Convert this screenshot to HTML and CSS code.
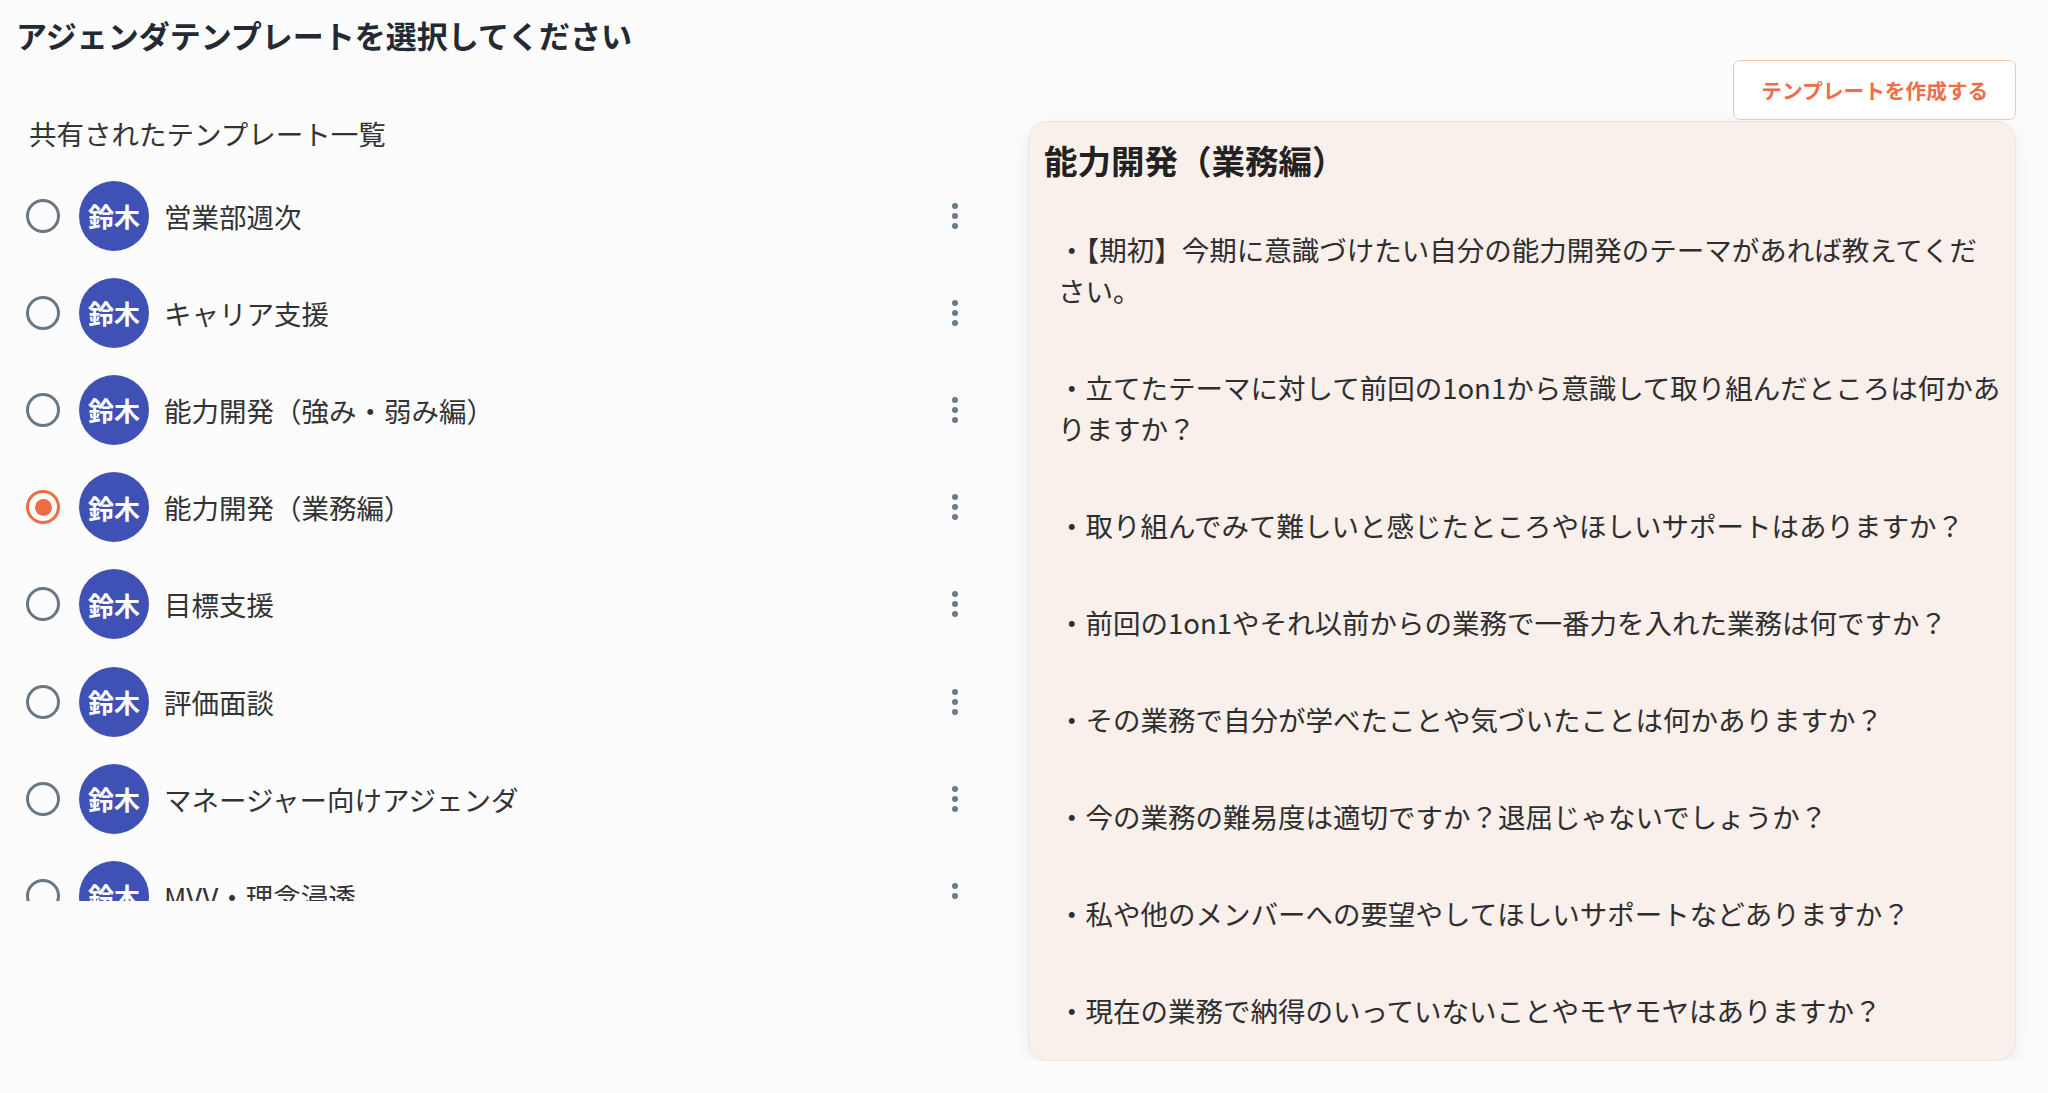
FILE: index.html
```html
<!DOCTYPE html>
<html lang="ja">
<head>
  <meta charset="UTF-8">
  <meta name="viewport" content="width=device-width, initial-scale=1.0">
  <title>アジェンダテンプレート選択</title>
  <link rel="stylesheet" href="styles.css">
</head>
<body>
  <h1 class="page-title">アジェンダテンプレートを選択してください</h1>

  <div class="layout">
    <section class="left">
      <h2 class="list-title">共有されたテンプレート一覧</h2>

      <ul class="template-list">
        <li class="row">
          <span class="radio"></span>
          <span class="avatar">鈴木</span>
          <span class="label">営業部週次</span>
          <span class="kebab"><i></i><i></i><i></i></span>
        </li>
        <li class="row">
          <span class="radio"></span>
          <span class="avatar">鈴木</span>
          <span class="label">キャリア支援</span>
          <span class="kebab"><i></i><i></i><i></i></span>
        </li>
        <li class="row">
          <span class="radio"></span>
          <span class="avatar">鈴木</span>
          <span class="label">能力開発（強み・弱み編）</span>
          <span class="kebab"><i></i><i></i><i></i></span>
        </li>
        <li class="row">
          <span class="radio checked"></span>
          <span class="avatar">鈴木</span>
          <span class="label">能力開発（業務編）</span>
          <span class="kebab"><i></i><i></i><i></i></span>
        </li>
        <li class="row">
          <span class="radio"></span>
          <span class="avatar">鈴木</span>
          <span class="label">目標支援</span>
          <span class="kebab"><i></i><i></i><i></i></span>
        </li>
        <li class="row">
          <span class="radio"></span>
          <span class="avatar">鈴木</span>
          <span class="label">評価面談</span>
          <span class="kebab"><i></i><i></i><i></i></span>
        </li>
        <li class="row">
          <span class="radio"></span>
          <span class="avatar">鈴木</span>
          <span class="label">マネージャー向けアジェンダ</span>
          <span class="kebab"><i></i><i></i><i></i></span>
        </li>
        <li class="row">
          <span class="radio"></span>
          <span class="avatar">鈴木</span>
          <span class="label">MVV・理念浸透</span>
          <span class="kebab"><i></i><i></i><i></i></span>
        </li>
      </ul>
    </section>

    <section class="right">
      <div class="actions">
        <button type="button" class="create-btn">テンプレートを作成する</button>
      </div>

      <div class="preview">
        <h2 class="preview-title">能力開発（業務編）</h2>
        <div class="preview-body">
          <p>・【期初】今期に意識づけたい自分の能力開発のテーマがあれば教えてくだ<br>さい。</p>
          <p>・立てたテーマに対して前回の1on1から意識して取り組んだところは何かあ<br>りますか？</p>
          <p>・取り組んでみて難しいと感じたところやほしいサポートはありますか？</p>
          <p>・前回の1on1やそれ以前からの業務で一番力を入れた業務は何ですか？</p>
          <p>・その業務で自分が学べたことや気づいたことは何かありますか？</p>
          <p>・今の業務の難易度は適切ですか？退屈じゃないでしょうか？</p>
          <p>・私や他のメンバーへの要望やしてほしいサポートなどありますか？</p>
          <p>・現在の業務で納得のいっていないことやモヤモヤはありますか？</p>
        </div>
      </div>
    </section>
  </div>
</body>
</html>
```

FILE: styles.css
```css
body {
  font-family: "Noto Sans CJK JP", "Noto Sans", sans-serif;
  background-color: #fcfcfc; /* off-white page */
  color: #333;
  margin: 0;
  padding: 15px 38px 0 16px;
}

.page-title {
  margin: 0;
  font-size: 31px;
  line-height: 40px;
  font-weight: 700;
  color: #232a33;
}

.layout {
  display: flex;
  gap: 22px;
}

/* left column */
.left {
  flex: 0 0 990px;
  padding-top: 60px;
}

.list-title {
  margin: 0 0 16px 13px;
  font-size: 27.5px;
  line-height: 36px;
  font-weight: 400;
  color: #333;
}

.template-list {
  list-style: none;
  margin: 0;
  padding: 0;
  height: 734px;
  overflow: hidden;
}

.row {
  display: flex;
  align-items: center;
  height: 97.2px;
  padding-left: 10px;
}

.radio {
  flex: 0 0 auto;
  width: 34px;
  height: 34px;
  box-sizing: border-box;
  border: 3px solid #687783; /* grey ring */
  border-radius: 50%;
  display: flex;
  align-items: center;
  justify-content: center;
}

.radio.checked {
  border-color: #ee6d42; /* orange selected */
}

.radio.checked::after {
  content: "";
  width: 17px;
  height: 17px;
  border-radius: 50%;
  background-color: #ee6d42;
}

.avatar {
  flex: 0 0 auto;
  width: 70px;
  height: 70px;
  margin-left: 19px;
  border-radius: 50%;
  background-color: #3f51b5; /* indigo */
  color: #fff;
  font-size: 26px;
  font-weight: 700;
  display: flex;
  align-items: center;
  justify-content: center;
}

.label {
  flex: 1;
  margin-left: 15px;
  font-size: 27.5px;
  color: #333;
  white-space: nowrap;
}

.kebab {
  flex: 0 0 40px;
  height: 40px;
  margin-right: 31px;
  display: flex;
  flex-direction: column;
  align-items: center;
  justify-content: center;
  gap: 4px;
}

.kebab i {
  width: 6px;
  height: 6px;
  border-radius: 50%;
  background-color: #6b7a89;
}

/* right column */
.right {
  flex: 1;
  padding-top: 5px;
}

.actions {
  display: flex;
  justify-content: flex-end;
}

.create-btn {
  font-family: inherit;
  width: 283px;
  height: 60px;
  background-color: #fff;
  border: 1.5px solid #f8c3b3; /* light salmon */
  border-radius: 7px;
  color: #ef6e47;
  font-size: 20.7px;
  font-weight: 700;
  cursor: pointer;
}

.preview {
  margin-top: 1px;
  background-color: #f9efeb; /* peach panel */
  border: 1px solid #e9e4e8;
  border-radius: 20px;
  box-shadow: 0 6px 22px rgba(0, 0, 0, 0.07);
  padding: 17px 15px 29px;
}

.preview-title {
  margin: 0;
  font-size: 33.5px;
  line-height: 42px;
  font-weight: 700;
  color: #222;
}

.preview-body {
  margin-top: 48px;
  padding-left: 14px;
}

.preview-body p {
  margin: 0 0 56px;
  font-size: 27.5px;
  line-height: 41px;
  color: #2e2e2e;
  white-space: nowrap;
}

.preview-body p:last-child {
  margin-bottom: 0;
}
```
